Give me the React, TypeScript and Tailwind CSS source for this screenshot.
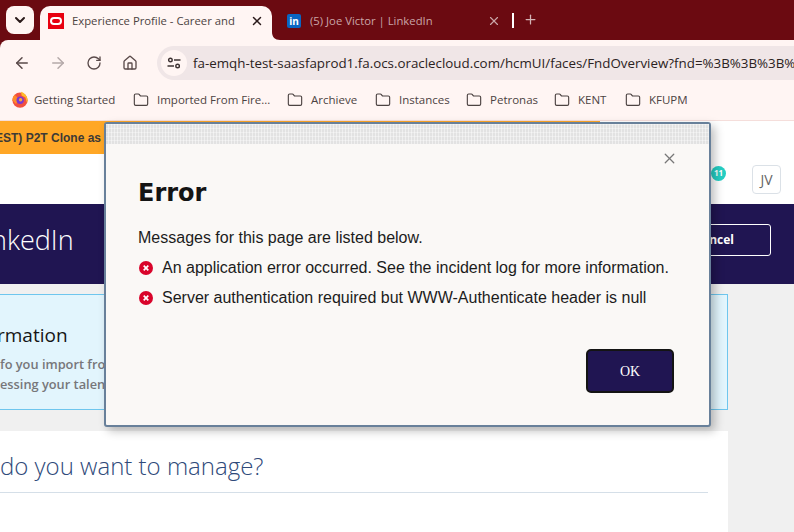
import { ArrowLeft, ArrowRight, ChevronDown, Folder, House, Plus, RotateCw, X } from 'lucide-react';

const bookmarks = [
  { label: 'Imported From Fire...', width: 'w-[154px]' },
  { label: 'Archieve', width: 'w-[88px]' },
  { label: 'Instances', width: 'w-[91px]' },
  { label: 'Petronas', width: 'w-[88px]' },
  { label: 'KENT', width: 'w-[71px]' },
  { label: 'KFUPM', width: 'w-[80px]' },
];

const messages = [
  'An application error occurred. See the incident log for more information.',
  'Server authentication required but WWW-Authenticate header is null',
];

function FirefoxIcon() {
  return (
    <svg width="16" height="17" viewBox="0 0 16 17">
      <circle cx="8" cy="9.2" r="7.6" fill="#f2503f" />
      <path d="M9 .8c3.8 1.4 6.6 4.6 6.6 8.4 0 1-.2 2-.6 2.8L13.4 6.6 9.6 4.4z" fill="#ffbc2a" />
      <path d="M.4 9.2c0-2.2.8-4 2.2-5.4L7 8l-3 5z" fill="#ff8a2a" />
      <circle cx="8.2" cy="9.2" r="3.7" fill="#7a3ad0" />
      <circle cx="8.6" cy="8.8" r="1.7" fill="#f9a83c" />
    </svg>
  );
}

function ErrorIcon() {
  return (
    <svg width="14" height="14" viewBox="0 0 14 14" className="shrink-0">
      <circle cx="7" cy="7" r="7" fill="#d9042b" />
      <path d="M4.7 4.7l4.6 4.6M9.3 4.7l-4.6 4.6" stroke="#fff" strokeWidth="1.7" />
    </svg>
  );
}

export default function App() {
  return (
    <div className="relative h-[532px] w-[794px] overflow-hidden bg-[#f0f0f0] font-['Open_Sans',sans-serif]">
      {/* tab strip */}
      <div className="flex h-10 items-end bg-[#6b0a11]">
        <div className="mb-[6px] ml-[6px] flex size-7 items-center justify-center rounded-lg bg-[#fff5f3]">
          <ChevronDown className="size-4 text-[#2a1a1a]" strokeWidth={3} />
        </div>
        <div className="ml-[6px] flex h-[34px] w-[232px] items-center rounded-t-[10px] bg-[#fff5f3] pb-1 pl-2">
          <div className="flex size-4 shrink-0 items-center justify-center bg-[#e8000f]">
            <div className="h-2 w-3 rounded-[4px] border-2 border-white" />
          </div>
          <span className="ml-2 w-[165px] overflow-hidden text-[11.3px] whitespace-nowrap text-[#4c4342]">
            Experience Profile - Career and
          </span>
          <X className="ml-[13px] size-[14px] text-[#2a1a1a]" strokeWidth={2.5} />
        </div>
        <svg width="8" height="8" viewBox="0 0 8 8" className="shrink-0">
          <path d="M0 0c0 5 3 8 8 8H0z" fill="#fff5f3" />
        </svg>
        <div className="flex h-[34px] w-[232px] items-center pb-1 pl-[7px]">
          <div className="flex size-[14px] shrink-0 items-center justify-center rounded-[2px] bg-[#0a66c2] text-[10px] leading-none font-bold text-white">
            in
          </div>
          <span className="ml-[9px] w-[177px] text-[11.3px] whitespace-nowrap text-[#c9a5a7]">(5) Joe Victor | LinkedIn</span>
          <X className="size-[14px] text-[#c9a5a7]" strokeWidth={2} />
        </div>
        <div className="mb-[12px] h-[15px] w-[2px] bg-white" />
        <Plus className="mb-[13px] ml-[9px] size-[15px] text-[#d3b4b6]" strokeWidth={2} />
      </div>

      {/* toolbar */}
      <div className="bg-[#6b0a11]">
        <div className="flex h-[46px] items-center gap-[18px] rounded-tl-lg bg-[#fff5f3] pl-[13px]">
          <ArrowLeft className="size-[18px] text-[#5a4a4a]" strokeWidth={2} />
          <ArrowRight className="size-[18px] text-[#b5a9a9]" strokeWidth={2} />
          <RotateCw className="mx-px size-4 text-[#5a4a4a]" strokeWidth={2} />
          <House className="mx-px size-4 text-[#5a4a4a]" strokeWidth={2} />
          <div className="flex h-[34px] flex-1 items-center overflow-hidden rounded-l-[17px] bg-[#f0e6e7] pl-1">
            <div className="flex size-[26px] shrink-0 items-center justify-center rounded-full bg-[#fff5f3]">
              <svg width="14" height="12" viewBox="0 0 14 12" fill="none" stroke="#3d3333" strokeWidth="1.4">
                <circle cx="3.4" cy="3" r="1.8" />
                <path d="M7 3h6.5M.5 9H7" />
                <circle cx="10.6" cy="9" r="1.8" />
              </svg>
            </div>
            <span className="ml-[6px] text-[13.35px] whitespace-nowrap text-[#2b2222]">
              fa-emqh-test-saasfaprod1.fa.ocs.oraclecloud.com/hcmUI/faces/FndOverview?fnd=%3B%3B%3B%
            </span>
          </div>
        </div>
      </div>

      {/* bookmarks */}
      <div className="flex h-[35px] items-center border-b border-[#f5dedb] bg-[#fff5f3] pb-[7px] pl-3 text-[11.5px] text-[#4c4342]">
        <FirefoxIcon />
        <span className="ml-[6px] w-[99px]">Getting Started</span>
        {bookmarks.map((b) => (
          <div key={b.label} className={`flex items-center gap-2 whitespace-nowrap ${b.width}`}>
            <Folder className="size-4 shrink-0 text-[#4c4342]" strokeWidth={1.7} />
            {b.label}
          </div>
        ))}
      </div>

      {/* page behind the dialog */}
      <div className="bg-white">
        <div className="flex h-[33px] w-[600px] items-center overflow-hidden bg-[#ffa726] font-['Liberation_Sans',sans-serif] text-[12px] font-bold whitespace-nowrap text-[#3d3a36]">
          <span className="-ml-[5px]">EST) P2T Clone as</span>
        </div>
      </div>
      <div className="flex h-[50px] items-center justify-end bg-white pr-[13px]">
        <div className="mr-[26px] mb-[12px] flex size-[15px] items-center justify-center rounded-full bg-[#25cfc4] text-[8px] font-bold text-white">
          11
        </div>
        <div className="flex size-[29px] items-center justify-center rounded-[4px] border border-[#dbe1e7] text-[14px] text-[#666]">
          JV
        </div>
      </div>
      <div className="flex h-[80px] items-center justify-between overflow-hidden bg-[#201552] pr-[23px] pb-2 text-white">
        <span className="-ml-[29px] text-[27px] font-light">LinkedIn</span>
        <div className="flex h-8 w-[120px] items-center justify-end rounded-[3px] border border-white pr-9 text-[12px] font-bold">
          ncel
        </div>
      </div>
      <div className="mt-[10px] flex h-[116px] w-[728px] flex-col overflow-hidden border border-l-0 border-[#6ec6ee] bg-[#e2f5fd] pt-[26px]">
        <span className="-ml-[3px] text-[19px] leading-7 whitespace-nowrap text-[#161616]">rmation</span>
        <span className="mt-[5px] text-[12.8px] leading-[20px] font-semibold whitespace-nowrap text-[#77777a]">fo you import fro</span>
        <span className="text-[12.8px] leading-[20px] font-semibold whitespace-nowrap text-[#77777a]">essing your talen</span>
      </div>
      <div className="mt-[21px] h-[101px] w-[728px] bg-white pt-[20px]">
        <div className="w-[708px] border-b border-[#d5dfe8] pb-[11px] text-[24px] leading-[30px] font-light whitespace-nowrap text-[#2f4a7a]">
          do you want to manage?
        </div>
      </div>

      {/* error dialog */}
      <div className="absolute top-[122px] left-[104px] flex h-[305px] w-[607px] flex-col rounded-[3px] border-2 border-[#68809a] bg-[#faf8f6] font-['Liberation_Sans',sans-serif] shadow-[4px_4px_10px_rgba(0,0,0,0.25)]">
        <div className="h-5 bg-[repeating-linear-gradient(0deg,transparent_0px,transparent_3px,rgba(255,255,255,0.35)_3px,rgba(255,255,255,0.35)_4px),repeating-linear-gradient(90deg,#e2e2e2_0px,#e2e2e2_2px,#efefef_2px,#efefef_3px)]" />
        <div className="flex justify-end pt-[6px] pr-[31px]">
          <X className="size-[17px] text-[#777]" strokeWidth={1.8} />
        </div>
        <div className="flex flex-1 flex-col pl-[32px]">
          <h1 className="mt-[12px] font-['DejaVu_Sans',sans-serif] text-[24px] leading-7 font-bold text-[#141414]">
            Error
          </h1>
          <p className="mt-[22px] text-[16px] leading-[18px] text-[#1c1c1c]">Messages for this page are listed below.</p>
          <div className="mt-[12px] flex flex-col gap-[12px]">
            {messages.map((m) => (
              <div key={m} className="ml-[1px] flex items-center gap-[9px] text-[16px] leading-[18px] text-[#1c1c1c]">
                <ErrorIcon />
                {m}
              </div>
            ))}
          </div>
          <div className="mt-[42px] flex justify-end pr-[35px]">
            <button className="flex h-[44px] w-[88px] items-center justify-center rounded-[5px] border-2 border-[#141414] bg-[#201552] font-['Liberation_Serif',serif] text-[14px] text-white">
              OK
            </button>
          </div>
        </div>
      </div>
    </div>
  );
}
